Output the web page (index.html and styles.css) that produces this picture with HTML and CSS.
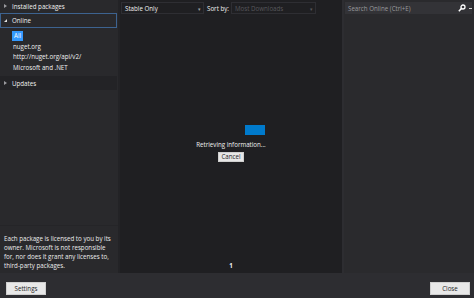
FILE: index.html
```html
<!DOCTYPE html>
<html lang="en">
<head>
  <meta charset="UTF-8" />
  <title>Manage NuGet Packages</title>
  <link rel="stylesheet" href="styles.css">
</head>
<body>

<div class="main">
  <div class="left">
    <div class="node"><span class="tri closed"></span>Installed packages</div>
    <div class="node selected"><span class="tri open"></span>Online</div>
    <div class="sources">
      <div class="source"><span class="hl">All</span></div>
      <div class="source">nuget.org</div>
      <div class="source">http://nuget.org/api/v2/</div>
      <div class="source">Microsoft and .NET</div>
    </div>
    <div class="node updates"><span class="tri closed"></span>Updates</div>
    <div class="spacer"></div>
    <p class="license">Each package is licensed to you by its<br>owner. Microsoft is not responsible<br>for, nor does it grant any licenses to,<br>third-party packages.</p>
  </div>

  <div class="gutter"></div>

  <div class="center">
    <div class="toolbar">
      <div class="combo stable">Stable Only<span class="arrow">▾</span></div>
      <span class="sort-label">Sort by:</span>
      <div class="combo sort">Most Downloads<span class="arrow">▾</span></div>
    </div>
    <div class="status">
      <div class="progress"></div>
      <div class="status-text">Retrieving information...</div>
      <button class="btn-small">Cancel</button>
    </div>
    <div class="pager">1</div>
  </div>

  <div class="right">
    <div class="search">
      <span class="placeholder">Search Online (Ctrl+E)</span>
      <svg class="search-icon" width="8" height="8" viewBox="0 0 8 8">
        <circle cx="5" cy="3" r="2" fill="none" stroke="#fff" stroke-width="1.3"/>
        <line x1="3.6" y1="4.4" x2="0.8" y2="7.2" stroke="#fff" stroke-width="1.5"/>
      </svg>
      <span class="dash"></span>
    </div>
  </div>
</div>

<div class="footer">
  <button class="btn">Settings</button>
  <button class="btn">Close</button>
</div>

</body>
</html>
```

FILE: styles.css
```css
body {
  margin: 0;
  width: 474px;
  height: 298px;
  overflow: hidden;
  background-color: #2d2d31;
  color: #f1f1f1;
  font-family: "Open Sans", "Noto Sans", sans-serif;
  font-size: 6.2px;
}
.main {
  display: flex;
  height: 273px;
}
.left {
  width: 118px;
  background-color: #29292c;
  display: flex;
  flex-direction: column;
}
.node {
  display: flex;
  align-items: center;
  height: 12px;
  padding-left: 4px;
  margin-right: 1px;
}
.node.selected {
  height: 13px;
  margin-top: 1px;
  border: 1px solid #3d6390;
  padding-left: 3px;
}
.node.updates {
  height: 14px;
  margin-top: 3px;
  background-color: #232326;
}
.tri {
  width: 0;
  height: 0;
  margin-right: 5px;
}
.tri.closed {
  border-top: 2.5px solid transparent;
  border-bottom: 2.5px solid transparent;
  border-left: 3px solid #9a9a9e;
}
.tri.open {
  border-left: 3.5px solid transparent;
  border-bottom: 3.5px solid #e0e0e0;
}
.sources {
  padding: 3px 0 0 13px;
}
.source {
  height: 10.5px;
  line-height: 10.5px;
}
.hl {
  display: inline-block;
  background-color: #3399ff;
  padding: 0 2px;
  margin-left: -1px;
  line-height: 10px;
  color: #fff;
}
.spacer {
  flex: 1;
  border-bottom: 1px solid #252528;
}
.license {
  margin: 0;
  padding: 8px 4px 3px 4px;
  line-height: 9px;
  color: #ececec;
}
.gutter {
  width: 2px;
  background-color: #232326;
}
.center {
  flex: 1;
  background-color: #1f1f22;
  display: flex;
  flex-direction: column;
}
.toolbar {
  display: flex;
  align-items: center;
  height: 16px;
  padding-left: 1px;
}
.combo {
  position: relative;
  height: 12px;
  line-height: 12px;
  padding-left: 3px;
  border: 1px solid #2e2e33;
  box-sizing: border-box;
}
.combo.stable {
  width: 83px;
  background-color: #1f1f22;
}
.combo.sort {
  width: 85px;
  color: #58585c;
}
.arrow {
  position: absolute;
  right: 2px;
  top: 0;
  font-size: 5px;
  color: #a0a0a0;
}
.combo.sort .arrow {
  color: #58585c;
}
.sort-label {
  margin: 0 2px 0 3px;
}
.status {
  flex: 1;
  display: flex;
  flex-direction: column;
  align-items: center;
  padding-top: 109px;
}
.progress {
  width: 20px;
  height: 10px;
  background-color: #007acc;
  margin-left: 48px;
}
.status-text {
  margin-top: 5px;
  line-height: 9px;
}
.btn-small {
  margin-top: 3px;
  font-family: inherit;
  font-size: 6.2px;
  height: 10px;
  padding: 0 2px;
  line-height: 8px;
  border: 1px solid #cfcfcf;
  background-color: #e6e6e6;
  color: #1e1e1e;
}
.pager {
  text-align: center;
  height: 13px;
  line-height: 12px;
  font-weight: bold;
}
.right {
  width: 130px;
  margin-left: 2px;
  background-color: #2a2a2d;
}
.search {
  display: flex;
  align-items: center;
  height: 12px;
  margin: 2px 2px 0 1px;
  padding-left: 3px;
  background-color: #333337;
}
.placeholder {
  flex: 1;
  color: #9a9a9e;
}
.search-icon {
  margin-right: 3px;
}
.dash {
  width: 3px;
  height: 1px;
  background-color: #cfcfcf;
}
.footer {
  display: flex;
  justify-content: space-between;
  align-items: center;
  height: 25px;
  padding: 0 4px 0 6px;
}
.btn {
  width: 40px;
  height: 13px;
  margin-top: 6px;
  font-family: inherit;
  font-size: 6.2px;
  line-height: 11px;
  padding: 0;
  border: 1px solid #cfcfcf;
  background-color: #e8e8e8;
  color: #1e1e1e;
}
```
